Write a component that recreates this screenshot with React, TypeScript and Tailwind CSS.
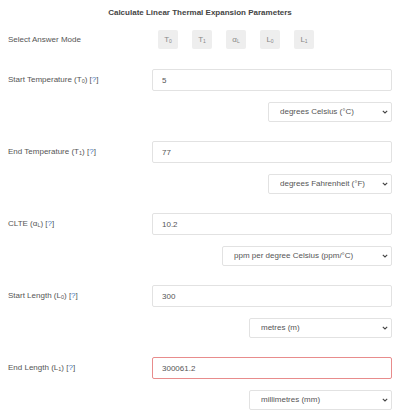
import { ReactNode } from "react"

const rows: {
  label: ReactNode
  value: string
  unit: string
  unitWidth: string
  error?: boolean
}[] = [
  {
    label: (
      <>
        Start Temperature (T<sub className="text-[5.5px]">0</sub>)
      </>
    ),
    value: "5",
    unit: "degrees Celsius (°C)",
    unitWidth: "w-[124px]",
  },
  {
    label: (
      <>
        End Temperature (T<sub className="text-[5.5px]">1</sub>)
      </>
    ),
    value: "77",
    unit: "degrees Fahrenheit (°F)",
    unitWidth: "w-[124px]",
  },
  {
    label: (
      <>
        CLTE (α<sub className="text-[5.5px]">L</sub>)
      </>
    ),
    value: "10.2",
    unit: "ppm per degree Celsius (ppm/°C)",
    unitWidth: "w-[170px]",
  },
  {
    label: (
      <>
        Start Length (L<sub className="text-[5.5px]">0</sub>)
      </>
    ),
    value: "300",
    unit: "metres (m)",
    unitWidth: "w-[143px]",
  },
  {
    label: (
      <>
        End Length (L<sub className="text-[5.5px]">1</sub>)
      </>
    ),
    value: "300061.2",
    unit: "millimetres (mm)",
    unitWidth: "w-[143px]",
    error: true,
  },
]

const modes: [string, string][] = [
  ["T", "0"],
  ["T", "1"],
  ["α", "L"],
  ["L", "0"],
  ["L", "1"],
]

const Chevron = () => (
  <svg
    className="pointer-events-none absolute right-[4px] top-1/2 -translate-y-1/2"
    width="6"
    height="4"
    viewBox="0 0 6 4"
  >
    <path d="M0.8 0.8 L3 3 L5.2 0.8" fill="none" stroke="#444" strokeWidth="1.1" />
  </svg>
)

export default function App() {
  return (
    <div className="w-[400px] h-[418px] bg-white font-['Liberation_Sans',Arial,sans-serif] text-[8px] text-[#555] px-[8px]">
      <h1 className="pt-[8px] text-center font-bold text-[8px] leading-[10px] text-[#444]">
        Calculate Linear Thermal Expansion Parameters
      </h1>

      <div className="flex items-center mt-[12px] h-[19px]">
        <div className="w-[150px] leading-[10px]">Select Answer Mode</div>
        <div className="flex gap-[14px]">
          {modes.map(([base, sub]) => (
            <button
              key={base + sub}
              className="w-[20px] h-[19px] bg-[#eeeeee] text-[#888] rounded-[2px] flex items-center justify-center leading-none"
            >
              {base}
              <sub className="text-[5px] relative top-[1px]">{sub}</sub>
            </button>
          ))}
        </div>
      </div>

      <div className="flex flex-col gap-[19px] mt-[20px]">
        {rows.map((row, i) => (
          <div key={i} className="flex">
            <div className="w-[144px] h-[22px] flex items-center leading-[10px]">
              <span>
                {row.label} [<span className="text-[#3c78c3]">?</span>]
              </span>
            </div>
            <div className="flex-1 flex flex-col items-end gap-[11px]">
              <input
                readOnly
                value={row.value}
                className={
                  row.error
                    ? "w-full h-[22px] px-[9px] rounded-[2px] border border-[#e88c8c] text-[8px] text-[#555] outline-none"
                    : "w-full h-[22px] px-[9px] rounded-[2px] border border-[#e2e2e2] text-[8px] text-[#555] outline-none"
                }
              />
              <div className={"relative " + row.unitWidth}>
                <select
                  className="w-full h-[20px] appearance-none pl-[11px] pr-[14px] rounded-[2px] border border-[#e2e2e2] bg-white text-[8px] text-[#555] outline-none"
                  defaultValue={row.unit}
                >
                  <option>{row.unit}</option>
                </select>
                <Chevron />
              </div>
            </div>
          </div>
        ))}
      </div>
    </div>
  )
}
